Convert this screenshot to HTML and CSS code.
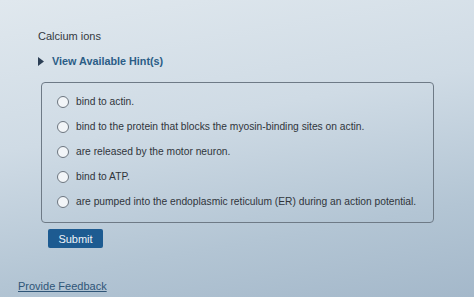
FILE: index.html
```html
<!DOCTYPE html>
<html>
<head>
<meta charset="utf-8">
<link rel="stylesheet" href="styles.css">
</head>
<body>
<div class="page">
  <div class="content">
    <p class="question">Calcium ions</p>
    <div class="hint">
      <svg class="tri" width="6" height="9" viewBox="0 0 6 9"><path d="M0 0 L6 4.5 L0 9 Z" fill="#2c3f55"/></svg>
      <span>View Available Hint(s)</span>
    </div>
    <div class="choices">
      <label class="choice"><span class="radio"></span><span>bind to actin.</span></label>
      <label class="choice"><span class="radio"></span><span>bind to the protein that blocks the myosin-binding sites on actin.</span></label>
      <label class="choice"><span class="radio"></span><span>are released by the motor neuron.</span></label>
      <label class="choice"><span class="radio"></span><span>bind to ATP.</span></label>
      <label class="choice"><span class="radio"></span><span>are pumped into the endoplasmic reticulum (ER) during an action potential.</span></label>
    </div>
    <button class="submit">Submit</button>
  </div>
  <a class="feedback" href="#">Provide Feedback</a>
</div>
</body>
</html>
```
FILE: styles.css
```css
html, body {
  margin: 0;
  padding: 0;
}
body {
  width: 474px;
  height: 297px;
  overflow: hidden;
  background: linear-gradient(170deg, #e0e8ee 0%, #cfdbe5 40%, #b3c5d4 75%, #a4b8ca 100%);
  font-family: "Liberation Sans", Arial, sans-serif;
  color: #34393f;
}
.page {
  display: flex;
  flex-direction: column;
  height: 297px;
}
.content {
  padding: 29px 0 0 38px;
  display: flex;
  flex-direction: column;
  align-items: flex-start;
}
.question {
  margin: 0;
  font-size: 11px;
  line-height: 14px;
}
.hint {
  margin-top: 11px;
  display: flex;
  align-items: center;
  gap: 8px;
  color: #2b5d86;
  font-weight: bold;
  font-size: 10.8px;
  line-height: 14px;
}
.choices {
  margin-top: 14px;
  margin-left: 3px;
  width: 393px;
  height: 141px;
  box-sizing: border-box;
  border: 1px solid #6e7a86;
  border-radius: 4px;
  padding: 12px 0 0 15px;
  display: flex;
  flex-direction: column;
  gap: 11px;
}
.choice {
  display: flex;
  align-items: center;
  gap: 7px;
  font-size: 10.25px;
  line-height: 14px;
  color: #30353b;
}
.radio {
  width: 10px;
  height: 10px;
  border: 1px solid #6c757f;
  border-radius: 50%;
  background: #f2f5f8;
  flex: none;
}
.submit {
  margin-top: 6px;
  margin-left: 10px;
  width: 55px;
  height: 19px;
  border: none;
  border-radius: 2px;
  background: #1d5b91;
  color: #eef3f8;
  font-family: "Liberation Sans", Arial, sans-serif;
  font-size: 11px;
  padding: 0;
}
.feedback {
  margin-top: auto;
  margin-bottom: 4px;
  margin-left: 18px;
  font-size: 11px;
  line-height: 14px;
  color: #2f5577;
  text-decoration: underline;
  align-self: flex-start;
}
```
